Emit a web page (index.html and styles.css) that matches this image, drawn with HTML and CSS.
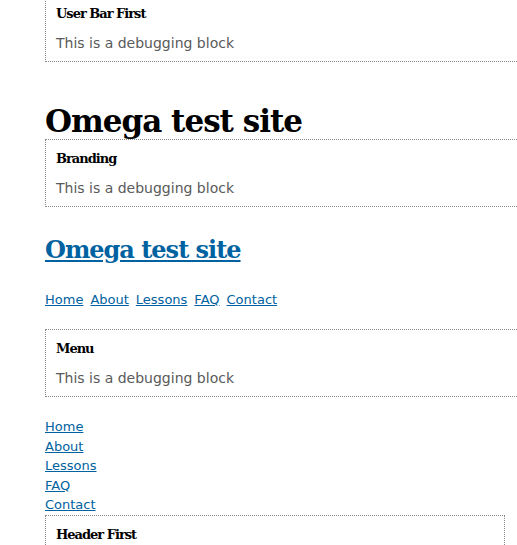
FILE: index.html
```html
<!DOCTYPE html>
<html lang="en">
<head>
<meta charset="utf-8">
<title>Omega test site</title>
<link rel="stylesheet" href="styles.css">
</head>
<body>
<div class="page">
  <section class="block wide">
    <h2 class="block-title">User Bar First</h2>
    <p class="debug">This is a debugging block</p>
  </section>

  <h1 class="site-title">Omega test site</h1>

  <section class="block wide">
    <h2 class="block-title">Branding</h2>
    <p class="debug">This is a debugging block</p>
  </section>

  <h1 class="site-name"><a href="#">Omega test site</a></h1>

  <ul class="nav-inline">
    <li><a href="#">Home</a></li>
    <li><a href="#">About</a></li>
    <li><a href="#">Lessons</a></li>
    <li><a href="#">FAQ</a></li>
    <li><a href="#">Contact</a></li>
  </ul>

  <section class="block wide menu-block">
    <h2 class="block-title">Menu</h2>
    <p class="debug">This is a debugging block</p>
  </section>

  <ul class="nav-stack">
    <li><a href="#">Home</a></li>
    <li><a href="#">About</a></li>
    <li><a href="#">Lessons</a></li>
    <li><a href="#">FAQ</a></li>
    <li><a href="#">Contact</a></li>
  </ul>

  <section class="block narrow">
    <h2 class="block-title">Header First</h2>
  </section>
</div>
</body>
</html>
```

FILE: styles.css
```css
html {
  overflow: hidden;
  background: #fff;
}

body {
  margin: 0;
  font-family: "DejaVu Sans", Verdana, sans-serif;
  font-size: 13px;
  color: #555;
}

.page {
  margin: -6px 0 0 45px;
  display: flex;
  flex-direction: column;
  align-items: flex-start;
}

.block {
  box-sizing: border-box;
  border: 1px dotted #888;
  padding: 10px 10px 8px;
  flex-shrink: 0;
}

.wide {
  width: 940px;
}

.narrow {
  width: 460px;
}

.block-title {
  margin: 0 0 10px;
  font-family: "DejaVu Serif", Georgia, serif;
  font-weight: bold;
  font-size: 13px;
  line-height: 18px;
  letter-spacing: -1px;
  color: #000;
}

.debug {
  margin: 0;
  font-size: 14px;
  line-height: 20px;
  color: #5a5a5a;
}

.site-title {
  margin: 41px 0 0;
  font-family: "DejaVu Serif", Georgia, serif;
  font-weight: bold;
  font-size: 31px;
  line-height: 36px;
  letter-spacing: -1px;
  color: #000;
}

.site-name {
  margin: 29px 0 0;
  font-family: "DejaVu Serif", Georgia, serif;
  font-weight: bold;
  font-size: 24px;
  line-height: 28px;
  letter-spacing: -1px;
}

a {
  color: #0062a0;
  text-decoration: underline;
}

.nav-inline {
  list-style: none;
  margin: 26px 0 20px;
  padding: 0;
  display: flex;
  gap: 7px;
  line-height: 19px;
}

.nav-stack {
  list-style: none;
  margin: 20px 0 0;
  padding: 0;
  line-height: 19.5px;
}
```
